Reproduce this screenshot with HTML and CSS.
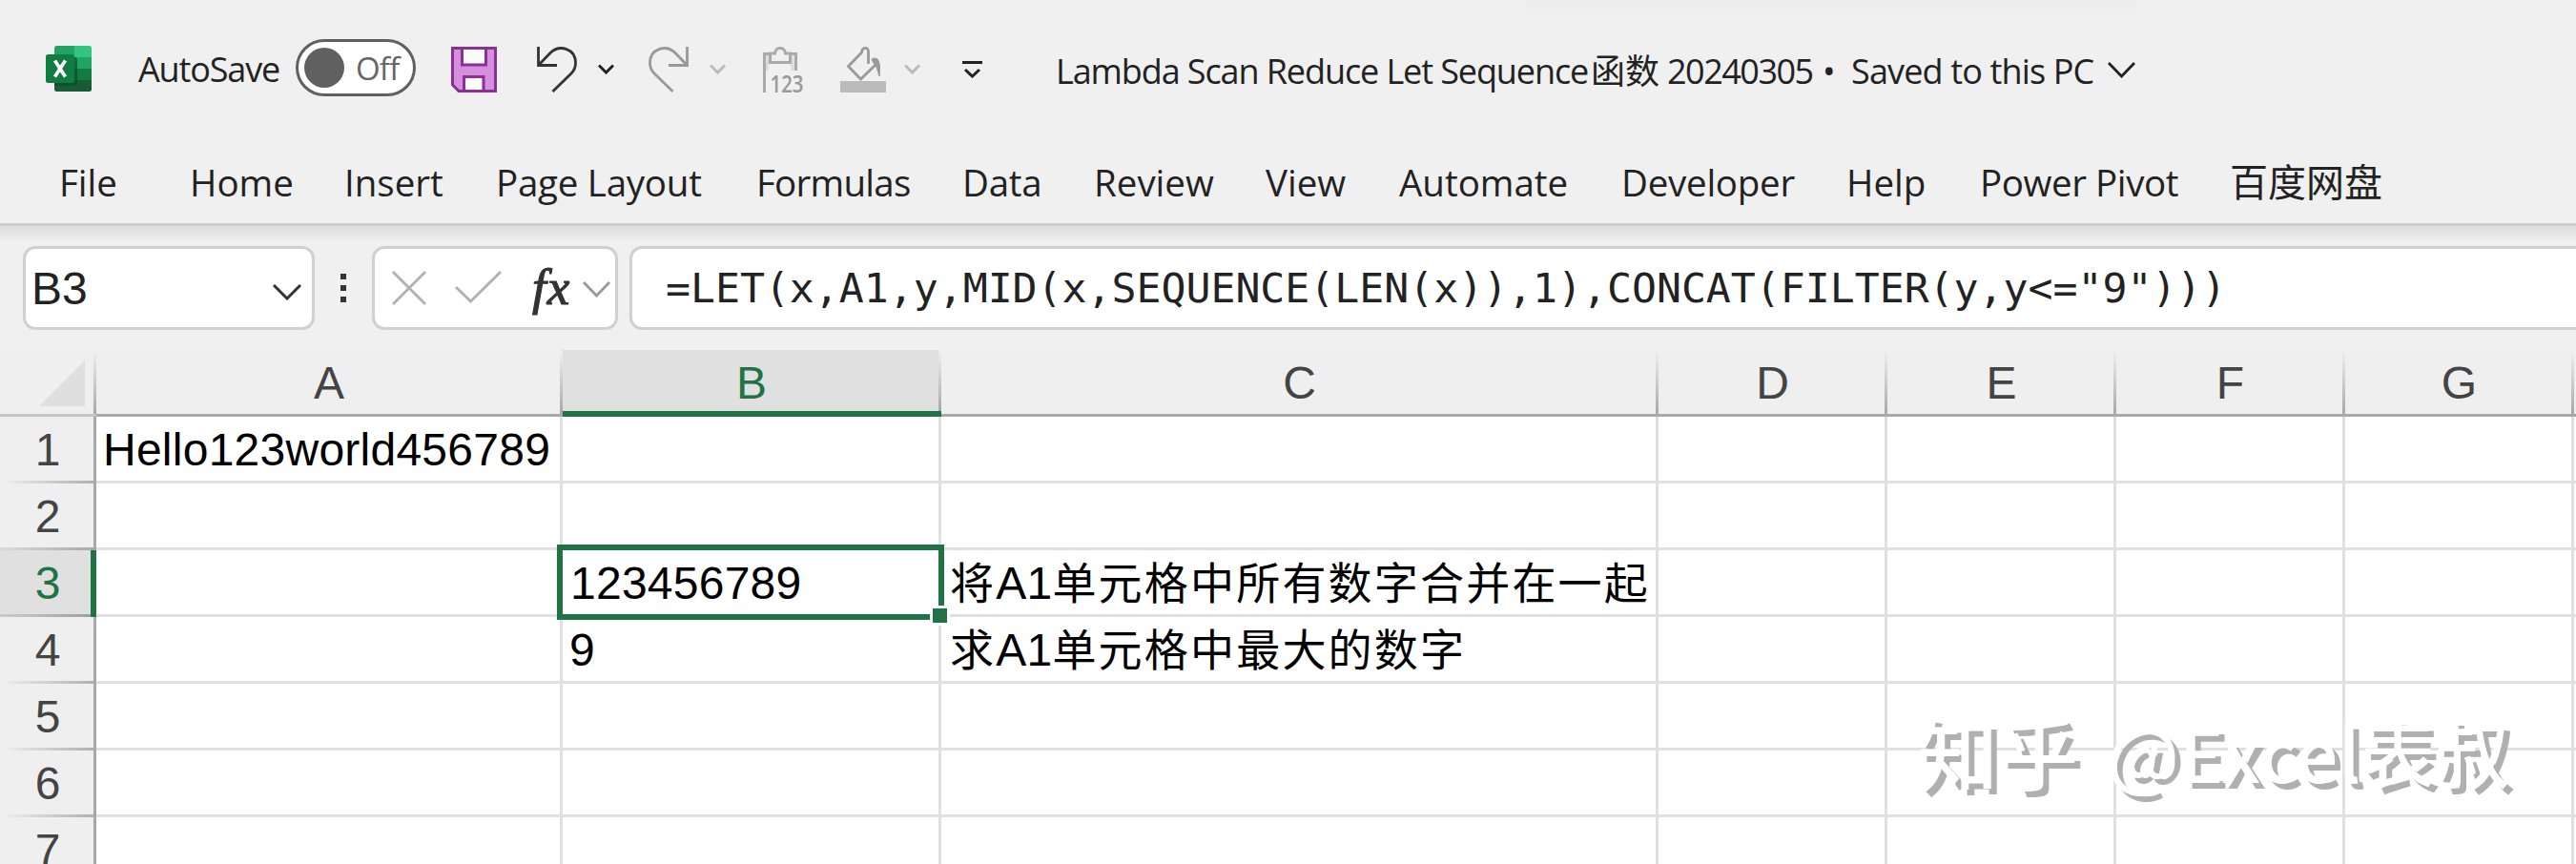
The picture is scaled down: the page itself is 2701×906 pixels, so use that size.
FILE: index.html
```
<!DOCTYPE html>
<html lang="en">
<head>
<meta charset="utf-8">
<title>Workbook</title>
<link rel="stylesheet" href="styles.css">
</head>
<body>
<div class="app">
  <header class="titlebar">
    <svg class="logo" width="48" height="48" viewBox="0 0 48 48">
      <clipPath id="sheet"><rect x="9" width="39" height="48" rx="2.5"/></clipPath>
      <g clip-path="url(#sheet)">
        <rect x="9" width="21" height="12" fill="#21a366"/><rect x="30" width="18" height="12" fill="#33c481"/>
        <rect x="9" y="12" width="21" height="12" fill="#107c41"/><rect x="30" y="12" width="18" height="12" fill="#21a366"/>
        <rect x="9" y="24" width="39" height="12" fill="#107c41"/><rect x="9" y="36" width="39" height="12" fill="#185c37"/>
        <rect x="6" y="12" width="27" height="30" rx="3" fill="#0b4d2a" opacity=".7"/>
      </g>
      <rect y="9" width="30" height="30" rx="2.5" fill="#107c41"/>
      <path d="M9.500 15.500L20.500 32.500M20.500 15.500L9.500 32.500" stroke="#fff" stroke-width="3.700" fill="none"/>
    </svg>
    <span class="t autosave">AutoSave</span>
    <div class="toggle"><i class="knob"></i><span class="off">Off</span></div>
    <svg class="save" width="48" height="48" viewBox="0 0 48 48">
      <path d="M1.500 1.500H46.500V46.500H8L1.500 40Z" fill="#d68fdc" stroke="#8a2f96" stroke-width="3"/>
      <path d="M11.500 1.500H36.500V19H11.500Z" fill="#fafafa" stroke="#8a2f96" stroke-width="3"/>
      <path d="M13.500 46.500V31.500H34V46.500Z" fill="#fafafa" stroke="#8a2f96" stroke-width="3"/>
    </svg>
    <svg class="undo" width="42" height="48" viewBox="0 0 42 48" fill="none" stroke="#333" stroke-width="2.800"><path d="M1.500 0V19.500H21M2 19L14 6.500C24-3 40.500 2 40.500 17C40.500 21 39 25 36 28L16.500 47"/></svg>
    <svg class="chev c1" width="17" height="11" viewBox="0 0 17 11"><path d="M1 1.500L8.500 9L16 1.500"/></svg>
    <svg class="redo" width="42" height="48" viewBox="0 0 42 48" fill="none" stroke="#999" stroke-width="2.800"><path d="M40.500 0V19.500H21M40 19L28 6.500C18-3 1.500 2 1.500 17C1.500 21 3 25 6 28L25.500 47"/></svg>
    <svg class="chev pale c2" width="17" height="11" viewBox="0 0 17 11"><path d="M1 1.500L8.500 9L16 1.500"/></svg>
    <svg class="paste" width="44" height="56" viewBox="0 0 44 56">
      <path d="M1.500 48V7.500H13M24 7.500H34.500V25" fill="none" stroke="#aaa" stroke-width="3"/>
      <path d="M4.500 9V25M31 9V25" stroke="#dcdcdc" stroke-width="3"/>
      <path d="M7.500 7V16.500H28.500V7H23.500C23 -.5 13 -.5 12.500 7Z" fill="#f0f0f0" stroke="#aaa" stroke-width="3"/>
      <text x="7.500" y="47.500" class="num" textLength="35" lengthAdjust="spacingAndGlyphs">123</text>
    </svg>
    <svg class="fill" width="48" height="48" viewBox="0 0 48 48" fill="none" stroke="#999" stroke-width="2.800">
      <path d="M23 5.500L8.500 20.500L21.500 34L37.500 18.500M22.500 6C23 0 29.500 0 29.500 5V18"/>
      <path d="M33 13C39 10 43 14 41 31C39 26 39 21 36 19Z" fill="#999" stroke-width="1"/>
      <rect y="36" width="48" height="12" fill="#bababa" stroke="none"/>
    </svg>
    <svg class="chev pale c3" width="17" height="11" viewBox="0 0 17 11"><path d="M1 1.500L8.500 9L16 1.500"/></svg>
    <svg class="custom" width="21" height="18" viewBox="0 0 21 18" fill="none" stroke="#222" stroke-width="3"><path d="M0 1.500H21M3 9L10.500 16L18 9"/></svg>
    <div class="doc"><span class="t d1">Lambda Scan Reduce Let Sequence</span><span class="t d2">函数</span><span class="t d3">20240305</span><span class="t d4">•</span><span class="t d5">Saved to this PC</span></div>
    <svg class="docchev" width="29" height="17" viewBox="0 0 29 17" fill="none" stroke="#222" stroke-width="2.800"><path d="M1 1L14.500 15L28 1"/></svg>
  </header>
  <nav class="tabs"><span class="m1">File</span><span class="m2">Home</span><span class="m3">Insert</span><span class="m4">Page Layout</span><span class="m5">Formulas</span><span class="m6">Data</span><span class="m7">Review</span><span class="m8">View</span><span class="m9">Automate</span><span class="m10">Developer</span><span class="m11">Help</span><span class="m12">Power Pivot</span><span class="m13">百度网盘</span></nav>
  <section class="fbar">
    <div class="box name"><span>B3</span><svg width="30" height="17" viewBox="0 0 30 17" fill="none" stroke="#333" stroke-width="3"><path d="M1 1L15 15L29 1"/></svg></div>
    <div class="dots"><i></i><i></i><i></i></div>
    <div class="box tools">
      <svg width="36" height="36" viewBox="0 0 36 36" fill="none" stroke="#b0b0b0" stroke-width="2.800"><path d="M1 1L35 35M35 1L1 35"/></svg>
      <svg class="check" width="49" height="34" viewBox="0 0 49 34" fill="none" stroke="#b0b0b0" stroke-width="2.800"><path d="M1 17L16.500 32L48 1"/></svg>
      <span class="fx">fx</span>
      <svg class="fxchev" width="29" height="17" viewBox="0 0 29 17" fill="none" stroke="#999" stroke-width="2.800"><path d="M1 1L14.500 15L28 1"/></svg>
    </div>
    <div class="box formula">=LET(x,A1,y,MID(x,SEQUENCE(LEN(x)),1),CONCAT(FILTER(y,y&lt;="9")))</div>
  </section>
  <main class="sheet">
    <div class="h corner"><svg width="48" height="48" viewBox="0 0 48 48"><path d="M48 0V48H0Z" fill="#dfdfdf"/></svg></div>
    <div class="h">A</div><div class="h on">B</div><div class="h">C</div><div class="h">D</div><div class="h">E</div><div class="h">F</div><div class="h">G</div><div class="h"></div>
    <div class="r">1</div><div class="c">Hello123world456789</div><div class="c"></div><div class="c"></div><div class="c"></div><div class="c"></div><div class="c"></div><div class="c"></div><div class="c"></div>
    <div class="r above">2</div><div class="c"></div><div class="c"></div><div class="c"></div><div class="c"></div><div class="c"></div><div class="c"></div><div class="c"></div><div class="c"></div>
    <div class="r on">3</div><div class="c"></div><div class="c active">123456789<i class="sel"></i><i class="handle"></i></div><div class="c note"><span class="cn">将</span>A1<span class="cn">单元格中所有数字合并在一起</span></div><div class="c"></div><div class="c"></div><div class="c"></div><div class="c"></div><div class="c"></div>
    <div class="r">4</div><div class="c"></div><div class="c in">9</div><div class="c note"><span class="cn">求</span>A1<span class="cn">单元格中最大的数字</span></div><div class="c"></div><div class="c"></div><div class="c"></div><div class="c"></div><div class="c"></div>
    <div class="r">5</div><div class="c"></div><div class="c"></div><div class="c"></div><div class="c"></div><div class="c"></div><div class="c"></div><div class="c"></div><div class="c"></div>
    <div class="r">6</div><div class="c"></div><div class="c"></div><div class="c"></div><div class="c"></div><div class="c"></div><div class="c"></div><div class="c"></div><div class="c"></div>
    <div class="r">7</div><div class="c"></div><div class="c"></div><div class="c"></div><div class="c"></div><div class="c"></div><div class="c"></div><div class="c"></div><div class="c"></div>
  </main>
  <div class="mark"><span class="zh">知乎</span><span class="who">@Excel表叔</span></div>
</div>
</body>
</html>
```
FILE: styles.css
```
* { box-sizing: border-box; }
body { margin: 0; background: #f0f0f0; color: #222; font-family: "Open Sans", "Noto Sans CJK SC", sans-serif; }
.app { position: relative; width: 2701px; height: 906px; overflow: hidden; }
svg { display: block; flex: none; }
span { white-space: pre; }

/* title bar */
.titlebar { height: 146px; display: flex; align-items: flex-start; padding-left: 48px; background: linear-gradient(#ebebeb, #eee 10px, #f0f0f0 20px) 1600px 0 / 640px 20px no-repeat; }
.logo { margin-top: 48px; }
.t { font-size: 36px; line-height: 50px; margin-top: 48px; flex: none; }
.autosave { margin-left: 49px; width: 165px; letter-spacing: -1.15px; }
.toggle { width: 126px; height: 60px; margin-top: 41px; border: 3px solid #606060; border-radius: 30px; background: #fff; display: flex; align-items: center; padding-left: 6px; flex: none; }
.knob { width: 42px; height: 42px; border-radius: 50%; background: #606060; }
.off { font-size: 33px; line-height: 40px; color: #666; margin: 2px 0 0 12px; letter-spacing: -.8px; }
.save { margin: 49px 0 0 37px; }
.undo { margin: 49px 0 0 42px; }
.chev { fill: none; stroke: #222; stroke-width: 3; margin-top: 67px; }
.chev.pale { stroke: #bbb; }
.c1, .c2 { margin-left: 22px; }
.redo { margin: 49px 0 0 36px; }
.paste { margin: 49px 0 0 39px; }
.num { font: 600 25px "Open Sans", sans-serif; fill: #999; }
.fill { margin: 49px 0 0 37px; }
.c3 { margin-left: 19px; }
.custom { margin: 64px 0 0 44px; }
.doc { display: flex; width: 1103px; margin-left: 77px; flex: none; }
.doc .t { margin-top: 50px; }
.d1 { width: 561px; letter-spacing: -1.1px; } .d2 { width: 80px; } .d3 { width: 163px; letter-spacing: -1.5px; } .d4 { width: 30px; } .d5 { letter-spacing: -.85px; }
.docchev { margin-top: 65px; }

/* ribbon tabs */
.tabs { height: 91px; display: flex; padding-left: 62px; font-size: 38.5px; line-height: 90px; border-bottom: 3px solid #ccc; }
.tabs span { flex: none; }
.m1 { width: 137px; } .m2 { width: 162px; } .m3 { width: 159px; } .m4 { width: 273px; letter-spacing: -.25px; } .m5 { width: 216px; letter-spacing: -.75px; }
.m6 { width: 138px; letter-spacing: -.3px; } .m7 { width: 180px; } .m8 { width: 140px; } .m9 { width: 233px; } .m10 { width: 236px; letter-spacing: -.25px; } .m11 { width: 140px; } .m12 { width: 262px; letter-spacing: -.4px; }
.m13 { font-size: 40px; }

/* formula bar */
.fbar { height: 130px; padding: 21px 0 0 24px; display: flex; background: linear-gradient(#dcdcdc, #f0f0f0 16px); }
.box { height: 88px; border: 3px solid #d0d0d0; border-radius: 13px; background: #fff; display: flex; flex: none; }
.name { width: 306px; padding-left: 6px; font: 48px/83px "Liberation Sans", sans-serif; }
.name svg { margin: 37px 11px 0 auto; }
.dots { width: 6px; margin: 29px 27px 0; display: flex; flex-direction: column; gap: 6px; }
.dots i { width: 6px; height: 6px; background: #333; }
.tools { width: 258px; padding: 23px 0 0 18px; }
.check { margin-left: 30px; }
.fx { font: italic 400 53px/52px "Liberation Serif", serif; -webkit-text-stroke: 1.2px #333; color: #333; margin: -9px 0 0 32px; width: 53px; letter-spacing: 1px; }
.fxchev { margin: 11px 0 0 0; }
.formula { width: 2060px; margin-left: 12px; padding-left: 35px; font: 43.150px/83px "DejaVu Sans Mono", monospace; white-space: pre; }

/* grid */
.sheet { display: grid; grid-template-columns: 101px 489px 397px 752px repeat(5, 240px); grid-template-rows: 70px repeat(7, 70px); font: 48px/70px "Liberation Sans", "Noto Sans CJK SC", sans-serif; }
.h { background: linear-gradient(#f0f0f0, #a8a8a8) right / 3px 100% no-repeat #efefef; border-bottom: 3px solid #a8a8a8; text-align: center; color: #444; line-height: 69px; padding-right: 1px; }
.h.on { background-color: #e0e0e0; border-bottom: 6px solid #217346; color: #217346; }
.h.corner { padding: 11px 0 0 41px; border-bottom-color: #c4c4c4; }
.r { background: linear-gradient(90deg, #f0f0f0, #b0b0b0) bottom / 100% 3px no-repeat #efefef; border-right: 3px solid #a8a8a8; color: #444; text-align: center; padding-left: 2px; line-height: 69px; }
.r.above { background: linear-gradient(90deg, #dcdcdc, #a8a8a8) bottom / 100% 3px no-repeat #efefef; }
.r.on { background: linear-gradient(90deg, #ccc, #a0a0a0) bottom / 100% 3px no-repeat #e0e0e0; color: #217346; border-right: 6px solid #217346; padding-left: 5px; }
.c { background: #fff; border-right: 3px solid #e0e0e0; border-bottom: 3px solid #e0e0e0; color: #000; padding-left: 7px; line-height: 69px; white-space: nowrap; letter-spacing: .25px; height: 70px; }
.note { padding-left: 9px; }
.cn { font-size: 46px; letter-spacing: 2.2px; line-height: 60px; }
.active { position: relative; padding-left: 8px; }
.in { padding-left: 7px; }
.sel { position: absolute; left: -6px; top: -6px; width: 406px; height: 79px; border: 6px solid #217346; }
.handle { position: absolute; left: 385px; top: 58px; width: 21px; height: 21px; background: #217346; border: 3px solid #fff; z-index: 1; }

/* watermark */
.mark { position: absolute; left: 2011px; top: 732px; display: flex; font: 500 78px/110px "Noto Sans CJK SC", sans-serif; color: #fff; text-shadow: 6px 6px 0 #b0b0b0; letter-spacing: .3px; }
.zh { font-size: 84px; width: 198px; }
```
